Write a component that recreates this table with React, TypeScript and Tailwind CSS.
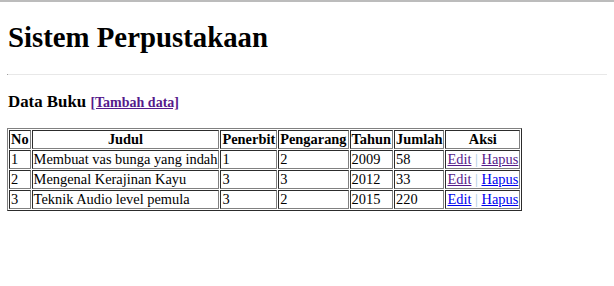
const books = [
  { no: 1, judul: "Membuat vas bunga yang indah", penerbit: 1, pengarang: 2, tahun: 2009, jumlah: 58, editVisited: true, hapusVisited: true },
  { no: 2, judul: "Mengenal Kerajinan Kayu", penerbit: 3, pengarang: 3, tahun: 2012, jumlah: 33, editVisited: true, hapusVisited: false },
  { no: 3, judul: "Teknik Audio level pemula", penerbit: 3, pengarang: 2, tahun: 2015, jumlah: 220, editVisited: false, hapusVisited: false },
];

const th = "border border-[#808080] [border-style:inset] px-px py-0 font-bold text-center";
const td = "border border-[#808080] [border-style:inset] px-px py-0 text-left";

export default function App() {
  return (
    <div className="min-h-[286px] bg-white border-t-2 border-[#bcbcbc] px-[7px] text-black font-['Liberation_Serif','Times_New_Roman',serif]">
      <h1 className="mt-[19px] text-[28.8px] leading-[33px] font-bold pl-px">Sistem Perpustakaan</h1>

      {/* garis pemisah */}
      <div className="mt-[20px] h-px bg-[#e8e8e8] border-l border-[#a0a0a0]" />

      <h3 className="mt-[17px] text-[16.85px] leading-[19px] font-bold pl-px">
        Data Buku{" "}
        <a href="#" className="text-[14px] text-[#551a8b] underline">[Tambah data]</a>
      </h3>

      <table className="mt-[16px] border-separate border-spacing-[1px] border border-[#808080] [border-style:outset] text-[14.4px] leading-[17px]">
        <thead>
          <tr>
            <th className={th}>No</th>
            <th className={th}>Judul</th>
            <th className={th}>Penerbit</th>
            <th className={th}>Pengarang</th>
            <th className={th}>Tahun</th>
            <th className={th}>Jumlah</th>
            <th className={th}>Aksi</th>
          </tr>
        </thead>
        <tbody>
          {books.map((b) => (
            <tr key={b.no}>
              <td className={td}>{b.no}</td>
              <td className={td}>{b.judul}</td>
              <td className={td}>{b.penerbit}</td>
              <td className={td}>{b.pengarang}</td>
              <td className={td}>{b.tahun}</td>
              <td className={td}>{b.jumlah}</td>
              <td className={td}>
                <a href="#" className={b.editVisited ? "text-[#551a8b] underline" : "text-[#0000ee] underline"}>Edit</a>
                <span className="text-[#a9c7e2]"> | </span>
                <a href="#" className={b.hapusVisited ? "text-[#551a8b] underline" : "text-[#0000ee] underline"}>Hapus</a>
              </td>
            </tr>
          ))}
        </tbody>
      </table>
    </div>
  );
}
